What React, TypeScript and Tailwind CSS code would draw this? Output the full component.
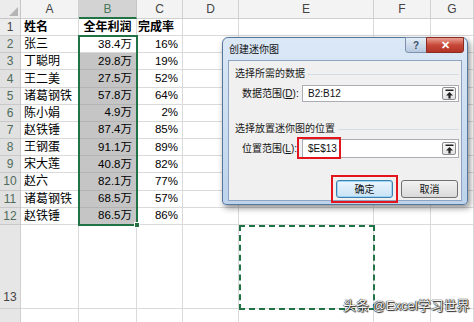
import React from 'react'

const cols = ['A', 'B', 'C', 'D', 'E', 'F', 'G']

const data = [
  ['姓名', '全年利润', '完成率'],
  ['张三', '38.4万', '16%'],
  ['丁聪明', '29.8万', '19%'],
  ['王二美', '27.5万', '52%'],
  ['诸葛钢铁', '57.8万', '64%'],
  ['陈小娟', '4.9万', '2%'],
  ['赵铁锤', '87.4万', '85%'],
  ['王钢蛋', '91.1万', '89%'],
  ['宋大莲', '40.8万', '82%'],
  ['赵六', '82.1万', '77%'],
  ['诸葛钢铁', '68.5万', '57%'],
  ['赵铁锤', '86.5万', '86%']
]

function UploadIcon() {
  return (
    <svg width="9" height="10" viewBox="0 0 9 10">
      <rect x="0.5" y="0.5" width="8" height="1.5" fill="#222" />
      <path d="M4.5 3 L8 6.5 L5.6 6.5 L5.6 9.5 L3.4 9.5 L3.4 6.5 L1 6.5 Z" fill="#222" />
    </svg>
  )
}

function RangeInput({ value }: { value: string }) {
  return (
    <div className="flex h-full w-[157px] items-center justify-between border border-[#abadb3] bg-white pl-[5px] pr-[2px]">
      <span className="text-[10px] text-[#111]">{value}</span>
      <div className="flex h-[13px] w-[14px] items-center justify-center rounded-[2px] border border-[#8c8c8c] bg-gradient-to-b from-[#fbfbfb] to-[#e2e2e2]">
        <UploadIcon />
      </div>
    </div>
  )
}

function GroupHeading({ label }: { label: string }) {
  return (
    <div className="flex items-center pl-[6px] pr-[2px]">
      <span className="text-[10px] leading-[14px] text-[#1a1a1a]">{label}</span>
      <div className="ml-[3px] h-px flex-1 bg-[#d5dce4]" />
    </div>
  )
}

function Dialog() {
  return (
    <div className="absolute left-[222px] top-[37px] flex h-[168px] w-[246px] flex-col rounded-t-[6px] rounded-b-[4px] border border-[#56779c] bg-gradient-to-b from-[#dbe8f6] to-[#bdd3ec] shadow-[2px_3px_6px_rgba(0,0,0,0.45)]">
      {/* Title bar */}
      <div className="relative flex h-[22px] items-center pl-[6px]">
        <span className="text-[10px] text-[#111]">创建迷你图</span>
        <div className="absolute right-[40px] top-[-1px] flex h-[16px] w-[22px] items-center justify-center rounded-bl-[3px] border border-[#7d93ad] bg-gradient-to-b from-[#e6eef8] to-[#b8c9de] text-[10px] font-bold text-[#3a4f6a]">
          ?
        </div>
        <div className="absolute right-[3px] top-[-1px] flex h-[16px] w-[38px] items-center justify-center rounded-br-[3px] border border-[#8b2b22] bg-gradient-to-b from-[#e8a093] via-[#c8483a] to-[#b13426] text-[11px] font-bold text-white">
          ✕
        </div>
      </div>

      {/* Body */}
      <div className="mx-[5px] flex h-[141px] flex-col border border-[#8ea4c0] bg-[#f0f0f0]">
        <div className="mt-[6px]">
          <GroupHeading label="选择所需的数据" />
        </div>
        <div className="mt-[4px] flex h-[17px] items-center">
          <span className="w-[73px] pl-[13px] text-[10px] text-[#111]">
            数据范围(<span className="underline">D</span>):
          </span>
          <RangeInput value="B2:B12" />
        </div>
        <div className="mt-[20px]">
          <GroupHeading label="选择放置迷你图的位置" />
        </div>
        <div className="mt-[3px] flex h-[19px] items-center">
          <span className="w-[73px] pl-[13px] text-[10px] text-[#111]">
            位置范围(<span className="underline">L</span>):
          </span>
          <RangeInput value="$E$13" />
        </div>
        <div className="mt-[22px] flex justify-end gap-[8px] pr-[3px]">
          <div className="flex h-[18px] w-[57px] items-center justify-center rounded-[3px] border border-[#3c7fb1] bg-gradient-to-b from-[#eaf6fd] to-[#c9e3f5] text-[10px] text-[#111] shadow-[inset_0_0_0_1px_#9fd4f3]">
            确定
          </div>
          <div className="flex h-[18px] w-[57px] items-center justify-center rounded-[3px] border border-[#707070] bg-gradient-to-b from-[#f2f2f2] to-[#dadada] text-[10px] text-[#111]">
            取消
          </div>
        </div>
      </div>
    </div>
  )
}

export default function App() {
  return (
    <div className="relative h-[322px] w-[474px] overflow-hidden bg-white font-['Liberation_Sans','Noto_Sans_CJK_SC',sans-serif]">
      <div className="grid grid-cols-[21px_58px_58px_46px_56px_135px_57px_43px] grid-rows-[19px_repeat(12,17.17px)_84px_13px]">
        {/* header row */}
        <div className="relative border-b border-r border-[#c6c6c6] bg-[#ececec]">
          <svg className="absolute bottom-[2px] right-[2px]" width="9" height="9" viewBox="0 0 9 9">
            <path d="M9 0 L9 9 L0 9 Z" fill="#b5b5b5" />
          </svg>
        </div>
        {cols.map((c) => (
          <div
            key={c}
            className={
              c === 'B'
                ? 'flex items-center justify-center border-b-2 border-r border-b-[#217346] border-r-[#c6c6c6] bg-[#d3d3d3] text-[12px] text-[#4a7a5c]'
                : 'flex items-center justify-center border-b border-r border-[#d0d0d0] bg-[#f3f3f3] text-[12px] text-[#444]'
            }
          >
            {c}
          </div>
        ))}

        {/* data rows */}
        {data.map((row, i) => (
          <React.Fragment key={i}>
            <div
              className={
                i === 0
                  ? 'flex items-center justify-center border-b border-r border-[#cfcfcf] bg-[#ececec] text-[12px] text-[#444]'
                  : 'flex items-center justify-center border-b border-r border-[#c9c9c9] bg-[#e1e1e1] text-[12px] text-[#4f6b5a]'
              }
            >
              {i + 1}
            </div>
            <div
              className={
                i === 0
                  ? 'flex items-center border-b border-r border-[#dadada] pl-[3px] text-[12px] font-bold text-black'
                  : 'flex items-center border-b border-r border-[#dadada] pl-[3px] text-[12px] text-black'
              }
            >
              {row[0]}
            </div>
            <div
              className={
                i === 0
                  ? 'flex items-center justify-center border-b border-r border-[#dadada] text-[12px] font-bold text-black'
                  : i === 1
                    ? 'flex items-center justify-end border-b border-r border-[#dadada] pr-[4px] text-[11.5px] text-black'
                    : 'flex items-center justify-end border-b border-r border-[#b4b4b4] bg-[#c5c5c5] pr-[4px] text-[11.5px] text-black'
              }
            >
              {row[1]}
            </div>
            <div
              className={
                i === 0
                  ? 'flex items-center border-b border-r border-[#dadada] pl-[1px] text-[12px] font-bold text-black'
                  : 'flex items-center justify-end border-b border-r border-[#dadada] pr-[4px] text-[11.5px] text-black'
              }
            >
              {row[2]}
            </div>
            <div className="border-b border-r border-[#dadada]" />
            <div className="border-b border-r border-[#dadada]" />
            <div className="border-b border-r border-[#dadada]" />
            <div className="border-b border-r border-[#dadada]" />
          </React.Fragment>
        ))}

        {/* row 13 */}
        <div className="flex items-end justify-center border-b border-r border-[#cfcfcf] bg-[#e6e6e6] pb-[2px] text-[12px] text-[#444]">
          13
        </div>
        {cols.map((c) => (
          <div key={'r13' + c} className="border-b border-r border-[#dadada]" />
        ))}

        {/* row 14 */}
        <div className="border-r border-[#cfcfcf] bg-[#e6e6e6]" />
        {cols.map((c) => (
          <div key={'r14' + c} className="border-r border-[#dadada]" />
        ))}
      </div>

      {/* selection B2:B12 */}
      <div className="absolute left-[78px] top-[35px] h-[191px] w-[60px] border-2 border-[#217346]" />
      <div className="absolute left-[134px] top-[222px] h-[6px] w-[6px] border border-white bg-[#217346]" />

      {/* marching ants on E13 */}
      <div className="absolute left-[239px] top-[225px] h-[85px] w-[136px] border-2 border-dashed border-[#217346]" />

      <Dialog />

      {/* red highlight boxes */}
      <div className="absolute left-[297px] top-[137px] h-[22px] w-[44px] border-2 border-[#e3141c]" />
      <div className="absolute left-[331px] top-[175px] h-[28px] w-[67px] border-2 border-[#e3141c]" />

      {/* watermark */}
      <div className="absolute left-[343px] top-[296px] text-[13px] text-[#f2f2f2] [text-shadow:0_0_1px_#000,0_0_1px_#000,1px_1px_1px_#333]">
        头条 @Excel学习世界
      </div>
    </div>
  )
}
